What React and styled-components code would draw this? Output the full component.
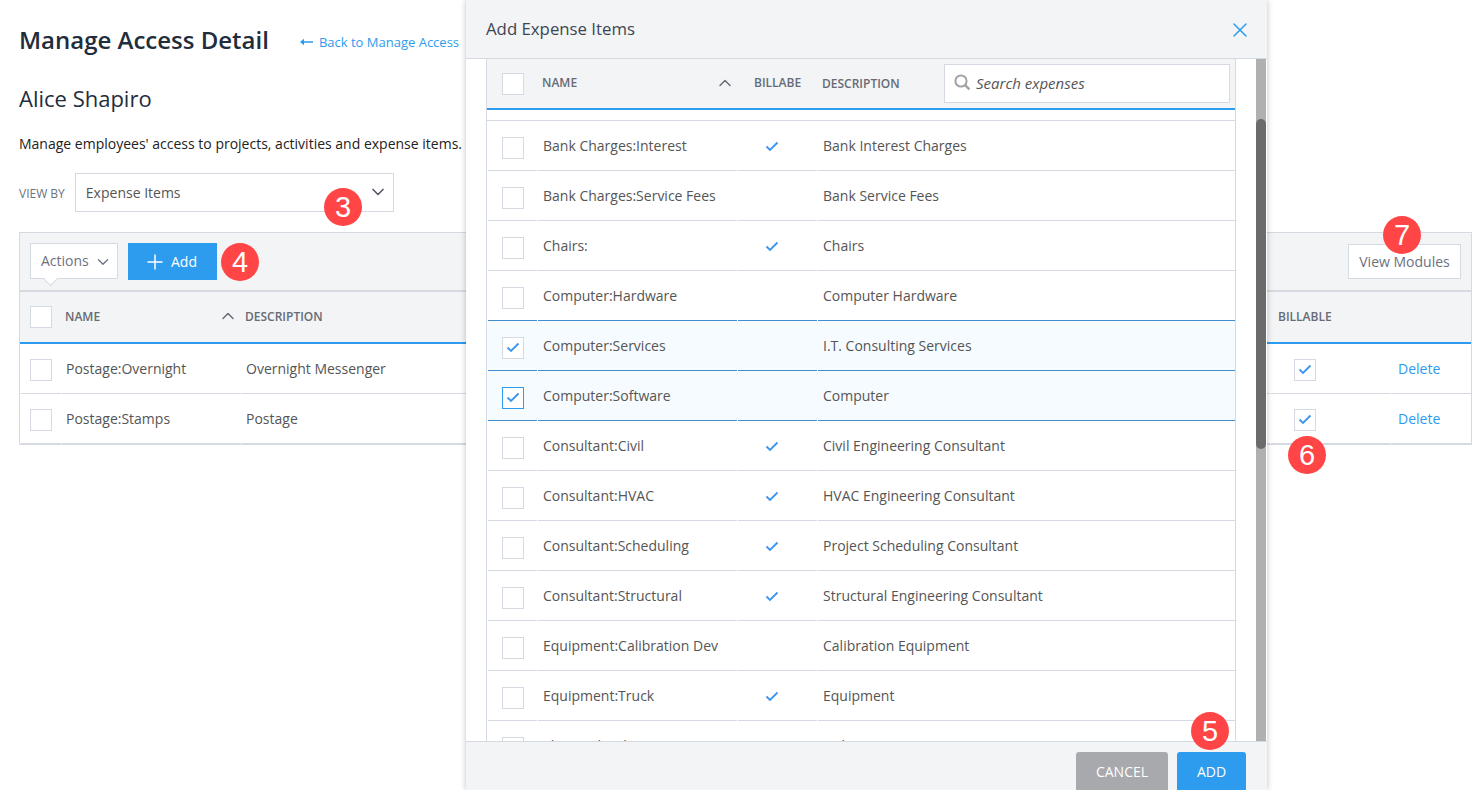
import React from 'react'
import styled, { createGlobalStyle } from 'styled-components'
import { ChevronDown, ChevronUp, Plus, X } from 'lucide-react'

const GlobalStyle = createGlobalStyle`
  html, body { margin: 0; padding: 0; height: 100%; overflow: hidden; background: #fff; }
  body { font-family: "Open Sans", "Liberation Sans", sans-serif; font-size: 14px; color: #555; }
  * { box-sizing: border-box; }
`

const Page = styled.div`
  position: relative;
  width: 1478px;
  height: 790px;
  overflow: hidden;
  padding: 0 6px 0 19px;
`

const TitleRow = styled.div`
  display: flex;
  align-items: flex-start;
  gap: 31px;
  padding-top: 24px;
  height: 72px;
`

const Title = styled.h1`
  margin: 0;
  font-size: 24px;
  line-height: 32px;
  font-weight: 600;
  color: #1f2d3d;
`

const BackLink = styled.a`
  display: inline-flex;
  align-items: center;
  gap: 6px;
  height: 36px;
  font-size: 13px;
  color: #2d9cee;
`

const Employee = styled.h2`
  margin: 0;
  height: 54px;
  font-size: 22px;
  line-height: 52px;
  font-weight: 400;
  color: #1f2d3d;
`

const Intro = styled.p`
  margin: 0;
  height: 47px;
  padding-top: 8px;
  font-size: 14px;
  line-height: 19px;
  color: #222;
`

const ViewRow = styled.div`
  display: flex;
  align-items: center;
  height: 39px;
  gap: 10px;
`

const ViewLabel = styled.span`
  padding-top: 2px;
  font-size: 12px;
  color: #6b7280;
`

const Select = styled.div`
  width: 319px;
  height: 39px;
  display: flex;
  align-items: center;
  justify-content: space-between;
  padding: 0 5px 0 10px;
  border: 1px solid #d5d9e2;
  font-size: 14px;
  color: #555;
  svg { color: #555b66; margin-top: -2px; }
`

const Panel = styled.section`
  margin-top: 20px;
  border: 1px solid #d5d9e2;
`

const Toolbar = styled.div`
  display: flex;
  align-items: center;
  justify-content: space-between;
  height: 59px;
  padding: 0 10px 1px;
  background: #f3f4f6;
  border-bottom: 2px solid #d5d9e2;
`

const ToolGroup = styled.div`
  display: flex;
  align-items: center;
  gap: 10px;
`

const ActionsButton = styled.div`
  position: relative;
  width: 88px;
  height: 36px;
  display: flex;
  align-items: center;
  gap: 5px;
  padding: 0 0 2px 10px;
  background: #fff;
  border: 1px solid #d5d9e2;
  font-size: 14px;
  color: #6b7280;
  svg { margin-top: 3px; }
  &::after {
    content: '';
    position: absolute;
    left: 14px;
    bottom: -6px;
    width: 10px;
    height: 10px;
    background: #fff;
    border-right: 1px solid #d5d9e2;
    border-bottom: 1px solid #d5d9e2;
    transform: rotate(45deg);
  }
`

const AddButton = styled.div`
  width: 89px;
  height: 37px;
  display: flex;
  align-items: center;
  gap: 4px;
  padding: 1px 0 0 15px;
  background: #2d9cee;
  color: #fff;
  font-size: 14px;
`

const OutlineButton = styled.div`
  width: 113px;
  height: 35px;
  display: flex;
  align-items: center;
  justify-content: center;
  background: #fff;
  border: 1px solid #d5d9e2;
  font-size: 14px;
  color: #6b7280;
`

const MainGrid = styled.div`
  display: grid;
  grid-template-columns: 41px 180px 1fr 120px 81px;
`

const HeadCell = styled.div`
  display: flex;
  align-items: center;
  justify-content: ${(p) => (p.$between ? 'space-between' : 'flex-start')};
  height: 52px;
  padding: ${(p) => p.$pad || '0 5px'};
  background: #f3f4f6;
  border-bottom: 2px solid #2d9cee;
  font-size: 12px;
  font-weight: 600;
  color: #666b75;
  svg { color: #666b75; }
`

const Cell = styled.div`
  position: relative;
  display: flex;
  align-items: center;
  height: 50px;
  padding: ${(p) => p.$pad || '0 6px 2px'};
  color: #555;
  font-size: 14px;
  &::after {
    content: '';
    position: absolute;
    left: 1px;
    right: 0;
    bottom: 0;
    height: 1px;
    background: #d5d9e2;
  }
`

const DeleteLink = styled.a`
  color: #2d9cee;
  font-size: 14px;
`

const Box = styled.span`
  width: 22px;
  height: 22px;
  flex: none;
  display: inline-flex;
  align-items: center;
  justify-content: center;
  background: #fff;
  border: 1px solid ${(p) => (p.$focus ? '#2d9cee' : '#d5d9e2')};
`

const Drawer = styled.aside`
  position: absolute;
  top: 0;
  left: 466px;
  width: 801px;
  height: 790px;
  display: flex;
  flex-direction: column;
  background: #fff;
  box-shadow: 0 0 6px rgba(0, 0, 0, 0.25);
`

const DrawerHead = styled.header`
  flex: none;
  height: 59px;
  display: flex;
  align-items: center;
  justify-content: space-between;
  padding: 0 15px 1px 20px;
  background: #f3f4f6;
  border-bottom: 1px solid #d5d9e2;
  font-size: 16.8px;
  color: #3c4653;
  svg { color: #2d9cee; margin-top: 2px; }
`

const DrawerBody = styled.div`
  flex: 1;
  min-height: 0;
  display: flex;
  padding-left: 20px;
  overflow: hidden;
`

const ListWrap = styled.div`
  width: 750px;
  flex: none;
  border-left: 1px solid #d5d9e2;
  border-right: 1px solid #d5d9e2;
`

const ListHead = styled.div`
  display: grid;
  grid-template-columns: 51px 207px 77px 1fr;
  height: 51px;
  background: #f3f4f6;
  border-bottom: 2px solid #2d9cee;
  font-size: 12px;
  font-weight: 600;
  color: #666b75;
`

const ListHeadCell = styled.div`
  display: flex;
  align-items: center;
  justify-content: ${(p) => (p.$between ? 'space-between' : 'flex-start')};
  padding: ${(p) => p.$pad || '0'};
  svg { color: #666b75; }
`

const SearchBox = styled.div`
  width: 286px;
  height: 39px;
  margin-left: auto;
  margin-right: 5px;
  display: flex;
  align-items: center;
  gap: 5px;
  padding: 0 9px 2px;
  background: #fff;
  border: 1px solid #d5d9e2;
  font-size: 15px;
  font-style: italic;
  font-weight: 400;
  color: #555;
`

const ListRows = styled.div`
  padding-top: 10px;
  &::before {
    content: '';
    display: block;
    height: 1px;
    background: #d5d9e2;
  }
`

const ListRow = styled.div`
  display: grid;
  grid-template-columns: 50px 200px 80px 1fr;
  height: 50px;
  background: ${(p) => (p.$selected ? '#f5fbff' : '#fff')};
  color: #555;
  font-size: 14px;
`

const ListCell = styled.div`
  position: relative;
  display: flex;
  align-items: center;
  padding: ${(p) => p.$pad || '0'};
  white-space: nowrap;
  &::before {
    content: '';
    display: ${(p) => (p.$selected ? 'block' : 'none')};
    position: absolute;
    left: 1px;
    right: 0;
    top: -1px;
    height: 1px;
    background: #3f8fd0;
  }
  &::after {
    content: '';
    position: absolute;
    left: 1px;
    right: 0;
    bottom: 0;
    height: 1px;
    background: ${(p) => (p.$selected ? '#3f8fd0' : '#d5d9e2')};
  }
`

const ScrollTrack = styled.div`
  width: 10px;
  margin-left: 20px;
  background: #b0b0b0;
`

const ScrollThumb = styled.div`
  width: 10px;
  height: 330px;
  margin-top: 60px;
  background: #6b6b6b;
  border-radius: 5px;
`

const DrawerFoot = styled.footer`
  flex: none;
  height: 49px;
  display: flex;
  justify-content: flex-end;
  align-items: flex-end;
  gap: 9px;
  padding-right: 21px;
  background: #f3f4f6;
  border-top: 1px solid #d5d9e2;
`

const FootButton = styled.div`
  width: ${(p) => p.$w}px;
  height: 38px;
  display: flex;
  align-items: center;
  justify-content: center;
  background: ${(p) => p.$bg};
  border-radius: 3px 3px 0 0;
  color: #fff;
  font-size: 14px;
`

const Badge = styled.span`
  position: absolute;
  left: ${(p) => p.$x - 19}px;
  top: ${(p) => p.$y - 19}px;
  width: 38px;
  height: 38px;
  display: flex;
  align-items: center;
  justify-content: center;
  border-radius: 50%;
  background: #ff4545;
  color: #fff;
  font-family: "Liberation Sans", Arial, sans-serif;
  font-size: 29px;
  line-height: 1;
`

const expenseRows = [
  { name: 'Bank Charges:Interest', billable: true, description: 'Bank Interest Charges' },
  { name: 'Bank Charges:Service Fees', description: 'Bank Service Fees' },
  { name: 'Chairs:', billable: true, description: 'Chairs' },
  { name: 'Computer:Hardware', description: 'Computer Hardware' },
  { name: 'Computer:Services', selected: true, description: 'I.T. Consulting Services' },
  { name: 'Computer:Software', selected: true, focus: true, description: 'Computer' },
  { name: 'Consultant:Civil', billable: true, description: 'Civil Engineering Consultant' },
  { name: 'Consultant:HVAC', billable: true, description: 'HVAC Engineering Consultant' },
  { name: 'Consultant:Scheduling', billable: true, description: 'Project Scheduling Consultant' },
  { name: 'Consultant:Structural', billable: true, description: 'Structural Engineering Consultant' },
  { name: 'Equipment:Calibration Dev', description: 'Calibration Equipment' },
  { name: 'Equipment:Truck', billable: true, description: 'Equipment' },
  { name: 'Electrical:Lighting', description: 'Lighting Fixtures' },
]

const accessRows = [
  { name: 'Postage:Overnight', description: 'Overnight Messenger' },
  { name: 'Postage:Stamps', description: 'Postage' },
]

const Tick = () => (
  <svg width="14" height="11" viewBox="0 0 14 11" fill="none">
    <path d="M1.5 5.5 L5 9 L12.5 1.5" stroke="#3d96ee" strokeWidth="1.9" />
  </svg>
)

const BackArrow = () => (
  <svg width="13" height="8" viewBox="0 0 13 8">
    <path d="M0 4 L4 0.8 V3.2 H13 V4.8 H4 V7.2 Z" fill="#2d9cee" />
  </svg>
)

const SearchIcon = () => (
  <svg width="17" height="17" viewBox="0 0 17 17" fill="none">
    <circle cx="7" cy="7" r="5.6" stroke="#a3a3a3" strokeWidth="2" />
    <path d="M11.2 11.2 L15.4 15.4" stroke="#a3a3a3" strokeWidth="2.4" />
  </svg>
)

const App = () => {
  return (
    <Page>
      <GlobalStyle />
      <TitleRow>
        <Title>Manage Access Detail</Title>
        <BackLink>
          <BackArrow />
          Back to Manage Access
        </BackLink>
      </TitleRow>
      <Employee>Alice Shapiro</Employee>
      <Intro>Manage employees' access to projects, activities and expense items.</Intro>
      <ViewRow>
        <ViewLabel>VIEW BY</ViewLabel>
        <Select>
          Expense Items
          <ChevronDown size={20} />
        </Select>
      </ViewRow>

      <Panel>
        <Toolbar>
          <ToolGroup>
            <ActionsButton>
              Actions
              <ChevronDown size={18} strokeWidth={1.75} />
            </ActionsButton>
            <AddButton>
              <Plus size={24} strokeWidth={1.5} />
              Add
            </AddButton>
          </ToolGroup>
          <OutlineButton>View Modules</OutlineButton>
        </Toolbar>
        <MainGrid>
          <HeadCell $pad="0 0 0 10px"><Box /></HeadCell>
          <HeadCell $between $pad="0 3px 2px 4px">NAME<ChevronUp size={20} strokeWidth={1.75} /></HeadCell>
          <HeadCell $pad="0 0 2px 4px">DESCRIPTION</HeadCell>
          <HeadCell $pad="0 0 2px 8px">BILLABLE</HeadCell>
          <HeadCell />
          {accessRows.map((row) => (
            <React.Fragment key={row.name}>
              <Cell $pad="1px 0 0 10px"><Box /></Cell>
              <Cell $pad="0 0 2px 5px">{row.name}</Cell>
              <Cell $pad="0 0 2px 5px">{row.description}</Cell>
              <Cell $pad="1px 0 0 24px"><Box><Tick /></Box></Cell>
              <Cell $pad="0 0 2px 8px"><DeleteLink>Delete</DeleteLink></Cell>
            </React.Fragment>
          ))}
        </MainGrid>
      </Panel>

      <Drawer>
        <DrawerHead>
          Add Expense Items
          <X size={24} strokeWidth={1.5} />
        </DrawerHead>
        <DrawerBody>
          <ListWrap>
            <ListHead>
              <ListHeadCell $pad="0 0 0 15px"><Box /></ListHeadCell>
              <ListHeadCell $between $pad="0 10px 2px 4px">NAME<ChevronUp size={20} strokeWidth={1.75} /></ListHeadCell>
              <ListHeadCell $pad="0 0 2px 9px">BILLABE</ListHeadCell>
              <ListHeadCell>
                DESCRIPTION
                <SearchBox>
                  <SearchIcon />
                  Search expenses
                </SearchBox>
              </ListHeadCell>
            </ListHead>
            <ListRows>
              {expenseRows.map((row) => (
                <ListRow key={row.name} $selected={row.selected}>
                  <ListCell $selected={row.selected} $pad="3px 0 0 15px">
                    <Box $focus={row.focus}>{row.selected && <Tick />}</Box>
                  </ListCell>
                  <ListCell $selected={row.selected} $pad="0 0 2px 6px">{row.name}</ListCell>
                  <ListCell $selected={row.selected} $pad="0 0 0 28px">{row.billable && <Tick />}</ListCell>
                  <ListCell $selected={row.selected} $pad="0 0 2px 6px">{row.description}</ListCell>
                </ListRow>
              ))}
            </ListRows>
          </ListWrap>
          <ScrollTrack><ScrollThumb /></ScrollTrack>
        </DrawerBody>
        <DrawerFoot>
          <FootButton $w={92} $bg="#a7a9ad">CANCEL</FootButton>
          <FootButton $w={69} $bg="#2d9cee">ADD</FootButton>
        </DrawerFoot>
      </Drawer>

      <Badge $x={343} $y={207}>3</Badge>
      <Badge $x={240} $y={262}>4</Badge>
      <Badge $x={1210} $y={731}>5</Badge>
      <Badge $x={1307} $y={455}>6</Badge>
      <Badge $x={1402} $y={235}>7</Badge>
    </Page>
  )
}

export default App
